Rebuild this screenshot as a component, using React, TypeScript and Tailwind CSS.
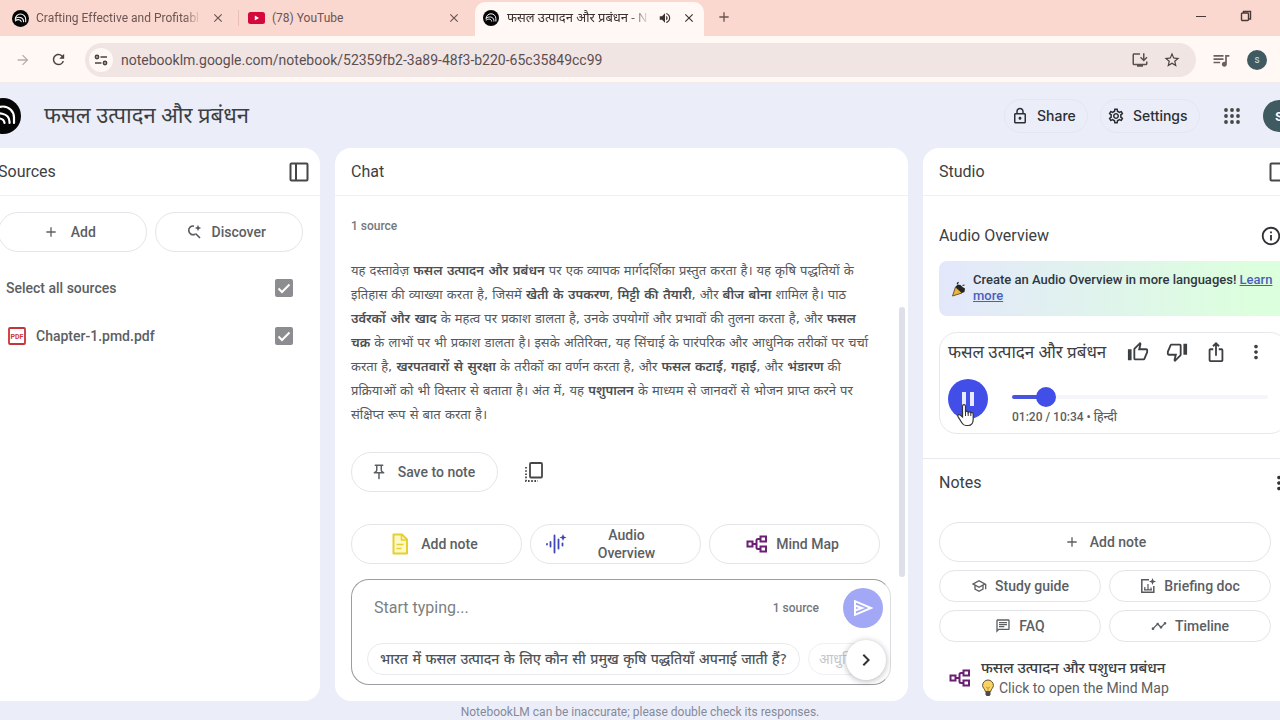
import type { ReactNode } from "react";
import {
  MdAdd,
  MdArrowForward,
  MdChevronRight,
  MdClose,
  MdInfoOutline,
  MdIosShare,
  MdMoreVert,
  MdOutlineChat,
  MdOutlineInstallDesktop,
  MdOutlineLock,
  MdOutlineSchool,
  MdOutlineSettings,
  MdOutlineThumbDown,
  MdOutlineThumbUp,
  MdOutlinePushPin,
  MdQueueMusic,
  MdRefresh,
  MdStarOutline,
  MdTimeline,
  MdVolumeUp,
} from "react-icons/md";

function NotebookLogo({ className }: { className: string }) {
  return (
    <svg viewBox="0 0 36 36" className={className} aria-hidden="true">
      <circle cx="18" cy="18" r="18" fill="#050505" />
      <g fill="none" stroke="#fff" strokeWidth="2.200" strokeLinecap="round">
        <path d="M7 20v-.5a11 11 0 0 1 22 0V25" />
        <path d="M7 18.500c4.500-5 17-4 17.500 5v1.500" />
        <path d="M7 23c4-4 12-3.500 12.500 2" />
      </g>
    </svg>
  );
}

function MindMapIcon() {
  return (
    <svg viewBox="0 0 22 20" className="h-5 w-[22px] shrink-0" fill="none" stroke="#6b1f73" strokeWidth="2" aria-hidden="true">
      <rect x="1.500" y="7.500" width="5" height="5" />
      <rect x="14.500" y="2.500" width="5.500" height="5" />
      <rect x="14.500" y="12.500" width="5.500" height="5" />
      <path d="M6.500 10h4M14.500 5h-2.500a1.500 1.500 0 0 0-1.500 1.500v7a1.500 1.500 0 0 0 1.500 1.500h2.500" />
    </svg>
  );
}

function PanelIcon({ side }: { side: "left" | "right" }) {
  return (
    <svg viewBox="0 0 20 20" className="size-5" fill="none" stroke="#444746" strokeWidth="2" aria-hidden="true">
      <rect x="1.500" y="1.500" width="17" height="17" rx="1" />
      <path d={side === "left" ? "M7 1.500v17" : "M13 1.500v17"} />
    </svg>
  );
}

function AppsIcon() {
  return (
    <svg viewBox="0 0 16 16" className="size-4" fill="#444746" aria-hidden="true">
      {[2, 8, 14].map((y) => [2, 8, 14].map((x) => <circle key={`${x}-${y}`} cx={x} cy={y} r="1.900" />))}
    </svg>
  );
}

function DiscoverIcon() {
  return (
    <svg viewBox="0 0 16 16" className="size-4" fill="none" stroke="#55595c" strokeWidth="1.600" aria-hidden="true">
      <path d="M8 2.200A4.300 4.300 0 1 0 9 10.200M9.500 9.500l4.500 4.500" />
      <path d="M12 .8l.9 2.300 2.300.9-2.300.9-.9 2.300-.9-2.300-2.300-.9 2.300-.9z" fill="#55595c" stroke="none" />
    </svg>
  );
}

function PdfIcon() {
  return (
    <svg viewBox="0 0 18 18" className="ml-0.5 size-[18px]" aria-hidden="true">
      <rect x="1" y="1" width="16" height="16" rx="1" fill="#fff" stroke="#c5343b" strokeWidth="1.800" />
      <text x="9" y="11.500" textAnchor="middle" fontSize="7" fontWeight="700" fill="#d0343b" fontFamily="Roboto, sans-serif">PDF</text>
    </svg>
  );
}

function NoteIcon() {
  return (
    <svg viewBox="0 0 18 22" className="h-[22px] w-[18px]" fill="none" stroke="#e6cf2e" strokeWidth="2" aria-hidden="true">
      <path d="M2.500 1.500h8.500l5 5v14H2.500z" fill="#fdf8c8" strokeLinejoin="round" />
      <path d="M10.500 2v5H16M5.500 11.500h7M5.500 15.500h5" strokeWidth="1.600" />
    </svg>
  );
}

function WaveIcon() {
  return (
    <svg viewBox="0 0 22 20" className="h-5 w-[22px]" stroke="#4046b8" strokeWidth="1.800" strokeLinecap="round" fill="none" aria-hidden="true">
      <path d="M2 10v.5M5.500 8v4.500M9.500 1.500v17M13.500 5.500v9M17.500 9.500v2" />
      <path d="M18 0l1 2.500 2.500 1-2.500 1-1 2.500-1-2.500-2.500-1 2.500-1z" fill="#4046b8" stroke="none" />
    </svg>
  );
}

function CopyIcon() {
  return (
    <svg viewBox="0 0 20 22" className="h-[22px] w-5" fill="none" stroke="#444746" strokeWidth="1.800" aria-hidden="true">
      <rect x="6" y="2" width="12" height="14.500" rx="1" />
      <path d="M2 6v14h12" strokeDasharray="1.600 1.600" />
    </svg>
  );
}

function BriefingIcon() {
  return (
    <svg viewBox="0 0 16 16" className="size-4" fill="none" stroke="#55595c" strokeWidth="1.500" aria-hidden="true">
      <path d="M9 1.800H1.800v12.400h12V8" />
      <path d="M4.800 11.500V9M8 11.500V6M11 11.500v-2M4 11.800h8" strokeWidth="1.200" />
      <path d="M12.500 0l1 2.500 2.500 1-2.500 1-1 2.500-1-2.500-2.500-1 2.500-1z" fill="#55595c" stroke="none" />
    </svg>
  );
}

function PartyIcon() {
  return (
    <svg viewBox="0 0 16 16" className="size-4 shrink-0" aria-hidden="true">
      <path d="M1.500 15L4.500 6l6.500 6z" fill="#e9b53c" stroke="#4a3a1c" strokeWidth="0.800" />
      <path d="M4.500 6l2-2.500 3 .5 2 2 2.500 1.500-.5 3.500-2.500 1z" fill="#252525" />
      <path d="M6 3l1.500-1.800M11.500 4.500L13.500 4" stroke="#252525" strokeWidth="1.200" />
    </svg>
  );
}

function BulbIcon() {
  return (
    <svg viewBox="0 0 14 18" className="h-[18px] w-3.5" aria-hidden="true">
      <path d="M7 1a5.400 5.400 0 0 0-5.400 5.400C1.600 9 4 10 4.300 12.500h5.400C10 10 12.400 9 12.400 6.400A5.400 5.400 0 0 0 7 1z" fill="#f8d265" stroke="#5c5236" strokeWidth="1" />
      <path d="M5 8l2 1.200L9 8M7 9v3.500" stroke="#c28d28" strokeWidth="0.800" fill="none" />
      <path d="M4.500 12.800h5v2.700l-1 1.500h-3l-1-1.500z" fill="#4b4b4b" />
    </svg>
  );
}

function HandCursor() {
  return (
    <svg viewBox="0 0 20 24" className="pointer-events-none absolute top-6 left-2 h-6 w-5" aria-hidden="true">
      <path
        d="M6.500 14V3.200c0-2.200 3-2.200 3 0V9c.6-1.200 2.600-1 2.700.4.700-1 2.500-.7 2.600.6.800-.7 2.400-.3 2.400 1.100V16c0 3.500-1.700 6.500-5 6.500H9.800c-2 0-3-1.200-4-2.800L2 13.600c-.8-1.500 1-2.700 2.300-1.500z"
        fill="#fff"
        stroke="#333"
        strokeWidth="1.200"
      />
      <path d="M9.500 9v4M12.200 9.500V13M14.800 10.500V13" stroke="#333" strokeWidth="1" />
    </svg>
  );
}

function Pill({ children, className }: { children: ReactNode; className: string }) {
  return (
    <button type="button" className={`flex items-center justify-center rounded-full border border-[#e4e5e8] bg-white text-sm font-medium text-[#5c6063] ${className}`}>
      {children}
    </button>
  );
}

function PanelHeader({ title, children, className }: { title: string; children?: ReactNode; className: string }) {
  return (
    <header className={`flex h-12 shrink-0 items-center justify-between border-b border-[#f0f0f2] ${className}`}>
      <h2 className="text-base text-[#3c4043]">{title}</h2>
      {children}
    </header>
  );
}

function SourceRow({ id, label, icon }: { id: string; label: string; icon?: ReactNode }) {
  return (
    <div className="flex h-12 items-center justify-between">
      <label htmlFor={id} className="flex items-center gap-2.5 text-sm font-medium text-[#5c6063]">
        {icon}
        {label}
      </label>
      <span className="relative flex size-[18px]">
        <input id={id} type="checkbox" defaultChecked className="size-[18px] appearance-none rounded-[2px] bg-[#8c8d91]" />
        <svg viewBox="0 0 18 18" className="pointer-events-none absolute inset-0" fill="none" stroke="#fff" strokeWidth="2" aria-hidden="true">
          <path d="M3.500 9.500l3.500 3.500L14.500 5.500" />
        </svg>
      </span>
    </div>
  );
}

function BrowserChrome() {
  return (
    <div className="shrink-0 text-xs text-[#6b5552]">
      <div className="flex h-9 items-end bg-[#fad7cf]">
        <div className="flex h-[34px] w-[238px] items-center pr-3 pb-0.5 pl-3">
          <NotebookLogo className="size-[17px] shrink-0" />
          <span className="ml-[7px] w-[165px] overflow-hidden mask-r-from-90% whitespace-nowrap">Crafting Effective and Profitabl</span>
          <button type="button" aria-label="Close tab" className="ml-2.5"><MdClose className="size-3.5" /></button>
        </div>
        <div className="mb-2.5 h-4 w-px shrink-0 bg-[#e9bfb8]" />
        <div className="flex h-[34px] w-[236px] items-center pr-3.5 pb-0.5 pl-[9px]">
          <svg viewBox="0 0 17 12" className="h-3 w-[17px]" aria-hidden="true">
            <rect width="17" height="12" rx="2.500" fill="#d4083c" />
            <path d="M6.800 3.500v5L11 6z" fill="#fff" />
          </svg>
          <span className="ml-[7px] flex-1">(78) YouTube</span>
          <button type="button" aria-label="Close tab"><MdClose className="size-3.5" /></button>
        </div>
        <div className="flex h-[34px] w-[229px] items-center rounded-t-[10px] bg-[#fff8f4] pr-2 pb-0.5 pl-2 text-[#3d3331]">
          <NotebookLogo className="size-4 shrink-0" />
          <span className="ml-2 w-[143px] overflow-hidden mask-r-from-85% text-[13px] whitespace-nowrap">फसल उत्पादन और प्रबंधन - N</span>
          <MdVolumeUp className="ml-2 size-3.5 shrink-0" />
          <button type="button" aria-label="Close tab" className="ml-2.5"><MdClose className="size-3.5" /></button>
        </div>
        <button type="button" aria-label="New tab" className="mb-[11px] ml-3"><MdAdd className="size-4" /></button>
        <div className="mr-7 mb-3 ml-auto flex items-center gap-[34px]">
          <button type="button" aria-label="Minimize" className="flex h-4 w-2.5 items-center"><span className="h-px w-full bg-[#4a3936]" /></button>
          <button type="button" aria-label="Restore">
            <svg viewBox="0 0 12 12" className="size-3" fill="none" stroke="#4a3936" strokeWidth="1.400" aria-hidden="true">
              <rect x="1.500" y="3" width="7" height="7.500" rx="1" />
              <path d="M3.500 3V1.500h7v7.500H9" />
            </svg>
          </button>
        </div>
      </div>
      <div className="flex h-[47px] items-center border-b border-[#f1e9ea] bg-[#fff8f4] pt-px pr-[13px] pl-[15px]">
        <button type="button" aria-label="Forward"><MdArrowForward className="size-4 text-[#b5adab]" /></button>
        <button type="button" aria-label="Reload" className="ml-[19px]"><MdRefresh className="size-[17px] text-[#4a4240]" /></button>
        <div className="ml-[18px] flex h-[34px] flex-1 items-center rounded-full bg-[#f1e5e4] pr-[15px] pl-1">
          <span className="flex size-6 items-center justify-center rounded-full bg-[#fff8f4]">
            <svg viewBox="0 0 14 12" className="h-3 w-3.5" fill="none" stroke="#4a4240" strokeWidth="1.600" aria-hidden="true">
              <circle cx="3" cy="3" r="1.600" /><path d="M6.500 3H13M1 9h6.500" /><circle cx="11" cy="9" r="1.600" />
            </svg>
          </span>
          <input aria-label="Address" readOnly value="notebooklm.google.com/notebook/52359fb2-3a89-48f3-b220-65c35849cc99" className="ml-2 min-w-0 flex-1 bg-transparent text-sm text-[#5b4f50] outline-none" />
          <MdOutlineInstallDesktop className="size-[18px] text-[#5b4f50]" />
          <MdStarOutline className="ml-3.5 size-[18px] text-[#4a4240]" />
        </div>
        <MdQueueMusic className="ml-[15px] size-5 text-[#6b605e]" />
        <span className="ml-4 flex size-5 items-center justify-center rounded-full bg-[#3f5a60] text-[10px] text-[#cfe0e2]">s</span>
      </div>
    </div>
  );
}

function AppHeader() {
  return (
    <header className="flex h-[65px] shrink-0 items-center">
      <NotebookLogo className="-ml-[15px] size-9 shrink-0" />
      <h1 className="ml-[23px] text-[22px] text-[#3c4043]">फसल उत्पादन और प्रबंधन</h1>
      <div className="-mr-[15px] ml-auto flex items-center text-sm font-medium text-[#2c2f33]">
        <button type="button" className="flex h-[34px] w-[84px] items-center gap-2 rounded-full border border-[#e3e7f0] pl-1.5 font-[Inter,sans-serif]">
          <MdOutlineLock className="size-[18px]" />Share
        </button>
        <button type="button" className="ml-3 flex h-[34px] w-[100px] items-center gap-2 rounded-full border border-[#e3e7f0] pl-1.5 font-[Inter,sans-serif]">
          <MdOutlineSettings className="size-[18px]" />Settings
        </button>
        <button type="button" aria-label="Google apps" className="ml-6"><AppsIcon /></button>
        <span className="ml-[23px] flex size-8 items-center justify-center rounded-full bg-[#3f5a60] text-base text-white">s</span>
      </div>
    </header>
  );
}

function SourcesPanel() {
  return (
    <section className="w-[336px] shrink-0 rounded-2xl bg-white">
      <PanelHeader title="Sources" className="pr-[11px] pl-3.5">
        <button type="button" aria-label="Collapse sources"><PanelIcon side="left" /></button>
      </PanelHeader>
      <div className="flex gap-2 pt-4 pr-[17px] pl-3.5">
        <Pill className="h-10 flex-1 gap-3 pr-1.5"><MdAdd className="size-4" />Add</Pill>
        <Pill className="h-10 flex-1 gap-2.5 pr-1.5"><DiscoverIcon />Discover</Pill>
      </div>
      <div className="pt-3 pr-[27px] pl-[22px]">
        <SourceRow id="all" label="Select all sources" />
        <SourceRow id="chapter" label="Chapter-1.pmd.pdf" icon={<PdfIcon />} />
      </div>
    </section>
  );
}

function ChatPanel() {
  return (
    <section className="relative flex min-w-0 flex-1 flex-col rounded-2xl bg-white">
      <PanelHeader title="Chat" className="px-4" />
      <div className="flex flex-1 flex-col pr-7 pl-4">
        <p className="pt-5 text-xs leading-5 font-medium text-[#74787c]">1 source</p>
        <p className="mt-[23px] font-['DejaVu_Sans','Noto_Sans',sans-serif] text-[13px] leading-6 whitespace-nowrap text-[#55595c] [&_b]:font-semibold [&_b]:text-[#4c4f52]">
          यह दस्तावेज़ <b>फसल उत्पादन और प्रबंधन</b> पर एक व्यापक मार्गदर्शिका प्रस्तुत करता है। यह कृषि पद्धतियों के<br />
          इतिहास की व्याख्या करता है, जिसमें <b>खेती के उपकरण</b>, <b>मिट्टी की तैयारी</b>, और <b>बीज बोना</b> शामिल है। पाठ<br />
          <b>उर्वरकों और खाद</b> के महत्व पर प्रकाश डालता है, उनके उपयोगों और प्रभावों की तुलना करता है, और <b>फसल</b><br />
          <b>चक्र</b> के लाभों पर भी प्रकाश डालता है। इसके अतिरिक्त, यह सिंचाई के पारंपरिक और आधुनिक तरीकों पर चर्चा<br />
          करता है, <b>खरपतवारों से सुरक्षा</b> के तरीकों का वर्णन करता है, और <b>फसल कटाई</b>, <b>गहाई</b>, और <b>भंडारण</b> की<br />
          प्रक्रियाओं को भी विस्तार से बताता है। अंत में, यह <b>पशुपालन</b> के माध्यम से जानवरों से भोजन प्राप्त करने पर<br />
          संक्षिप्त रूप से बात करता है।
        </p>
        <div className="mt-[25px] flex items-center gap-[26px]">
          <Pill className="h-10 w-[147px] gap-2.5 pr-1"><MdOutlinePushPin className="size-[18px]" />Save to note</Pill>
          <button type="button" aria-label="Copy"><CopyIcon /></button>
        </div>
        <div className="mt-8 grid grid-cols-3 gap-2">
          <Pill className="h-10 gap-3 pr-1"><NoteIcon />Add note</Pill>
          <Pill className="h-10 gap-7 pr-7"><WaveIcon /><span className="w-16 leading-[18px]">Audio Overview</span></Pill>
          <Pill className="h-10 gap-2 pr-1"><MindMapIcon />Mind Map</Pill>
        </div>
        <div className="relative mt-[15px] -mr-[11px] mb-4 h-[106px] rounded-[18px] border border-[#9b9da1] border-r-[#dcdde0]">
          <div className="flex h-[57px] items-center pr-[7px] pb-0.5 pl-[22px]">
            <input aria-label="Message" placeholder="Start typing..." className="min-w-0 flex-1 bg-transparent text-base outline-none placeholder:text-[#7c7f83]" />
            <span className="text-xs font-medium text-[#74787c]">1 source</span>
            <button type="button" aria-label="Send" className="ml-6 flex size-10 items-center justify-center rounded-full bg-[#a2a8f5]">
              <svg viewBox="0 0 20 18" className="h-[18px] w-5" fill="none" stroke="#fff" strokeWidth="2" aria-hidden="true">
                <path d="M2 2.200v13.600L18 9zM2 6.500L9 9l-7 2.500" />
              </svg>
            </button>
          </div>
          <div className="mr-1 ml-[15px] flex gap-2 overflow-hidden pt-1.5 font-['DejaVu_Sans','Noto_Sans',sans-serif] text-sm whitespace-nowrap">
            <button type="button" className="h-8 w-[433px] shrink-0 rounded-full border border-[#e9eaec] font-medium text-[#4f5357]">भारत में फसल उत्पादन के लिए कौन सी प्रमुख कृषि पद्धतियाँ अपनाई जाती हैं?</button>
            <button type="button" className="h-8 shrink-0 rounded-full border border-[#f0f0f2] px-2.5 text-[#c4c6c9]">आधुनिक</button>
          </div>
          <button type="button" aria-label="Next suggestions" className="absolute right-1 bottom-1 flex size-10 items-center justify-center rounded-full bg-white text-[#303236] shadow-[0_1px_6px_rgba(0,0,0,0.3)]">
            <MdChevronRight className="size-6" />
          </button>
        </div>
      </div>
      <div className="absolute top-[159px] right-[3px] h-[270px] w-1.5 rounded-full bg-[#dde0e8]" />
    </section>
  );
}

function StudioPanel() {
  return (
    <section className="flex w-[381px] shrink-0 flex-col rounded-2xl bg-white">
      <PanelHeader title="Studio" className="pr-[15px] pl-4">
        <button type="button" aria-label="Collapse studio"><PanelIcon side="right" /></button>
      </PanelHeader>
      <div className="pr-4 pl-4">
        <div className="flex items-center justify-between pt-7 pr-[6px]">
          <h3 className="text-base text-[#3c4043]">Audio Overview</h3>
          <button type="button" aria-label="About audio overview"><MdInfoOutline className="size-[22px] text-[#303236]" /></button>
        </div>
        <div className="mt-[13px] flex h-[55px] items-center gap-1.5 rounded-lg bg-linear-to-r from-[#e3e7fb] to-[#dcffdd] to-90% pl-3">
          <PartyIcon />
          <p className="w-[304px] pb-0.5 text-[13px] leading-4 font-medium text-[#303640]">
            Create an Audio Overview in more languages! <a href="#languages" className="text-[#4b5ebd] underline">Learn more</a>
          </p>
        </div>
        <div className="mt-4 h-[102px] rounded-[18px] border border-[#e7e8eb] pr-[15px] pl-2">
          <div className="flex h-[38px] items-center text-[#3c4043]">
            <h4 className="w-[179px] text-[17px] leading-6">फसल उत्पादन और प्रबंधन</h4>
            <button type="button" aria-label="Like"><MdOutlineThumbUp className="size-[22px]" /></button>
            <button type="button" aria-label="Dislike" className="ml-[17px]"><MdOutlineThumbDown className="size-[22px]" /></button>
            <button type="button" aria-label="Share audio" className="ml-[17px]"><MdIosShare className="size-[22px]" /></button>
            <button type="button" aria-label="Audio options" className="ml-[18px]"><MdMoreVert className="size-[22px]" /></button>
          </div>
          <div className="flex pt-2">
            <button type="button" aria-label="Pause" className="relative flex size-10 shrink-0 items-center justify-center rounded-full bg-[#414fe8]">
              <span className="flex gap-1"><span className="h-3.5 w-1 bg-[#e8eaff]" /><span className="h-3.5 w-1 bg-[#e8eaff]" /></span>
              <HandCursor />
            </button>
            <div className="ml-6 flex w-64 flex-col pt-2">
              <input aria-label="Playback position" type="range" defaultValue={10} className="my-2 h-1 w-full appearance-none rounded-full bg-linear-to-r from-[#4654df] from-13% to-[#f5f5fa] to-13% [&::-webkit-slider-thumb]:size-5 [&::-webkit-slider-thumb]:appearance-none [&::-webkit-slider-thumb]:rounded-full [&::-webkit-slider-thumb]:bg-[#414fe8]" />
              <p className="text-xs leading-5 font-medium text-[#5c6063]">01:20 / 10:34 • हिन्दी</p>
            </div>
          </div>
        </div>
      </div>
      <div className="mt-6 border-t border-[#e8e9ec] pr-[33px] pl-4">
        <div className="flex h-[47px] items-center justify-between">
          <h3 className="text-base text-[#3c4043]">Notes</h3>
          <button type="button" aria-label="Notes options" className="-mr-[19px]"><MdMoreVert className="size-[22px] text-[#303236]" /></button>
        </div>
        <Pill className="mt-4 h-10 w-full gap-2.5"><MdAdd className="size-4" />Add note</Pill>
        <div className="mt-2 grid grid-cols-2 gap-2">
          <Pill className="h-8 gap-2"><MdOutlineSchool className="size-4" />Study guide</Pill>
          <Pill className="h-8 gap-2"><BriefingIcon />Briefing doc</Pill>
          <Pill className="h-8 gap-2"><MdOutlineChat className="size-4" />FAQ</Pill>
          <Pill className="h-8 gap-2"><MdTimeline className="size-4" />Timeline</Pill>
        </div>
        <div className="mt-4 flex items-center gap-2.5 pl-2.5 text-sm leading-5 text-[#5c6063]">
          <MindMapIcon />
          <div>
            <p className="text-[15px] leading-5 font-medium text-[#3c4043]">फसल उत्पादन और पशुधन प्रबंधन</p>
            <p className="flex items-center gap-1"><BulbIcon />Click to open the Mind Map</p>
          </div>
        </div>
      </div>
    </section>
  );
}

export default function App() {
  return (
    <div className="flex min-h-screen flex-col overflow-hidden bg-[#ebeef8] font-[Roboto,'Noto_Sans',sans-serif]">
      <BrowserChrome />
      <AppHeader />
      <main className="-mr-6 -ml-4 flex flex-1 gap-[15px]">
        <SourcesPanel />
        <ChatPanel />
        <StudioPanel />
      </main>
      <footer className="h-[19px] shrink-0 pt-0.5 text-center text-xs leading-[18px] text-[#85899a]">
        NotebookLM can be inaccurate; please double check its responses.
      </footer>
    </div>
  );
}
